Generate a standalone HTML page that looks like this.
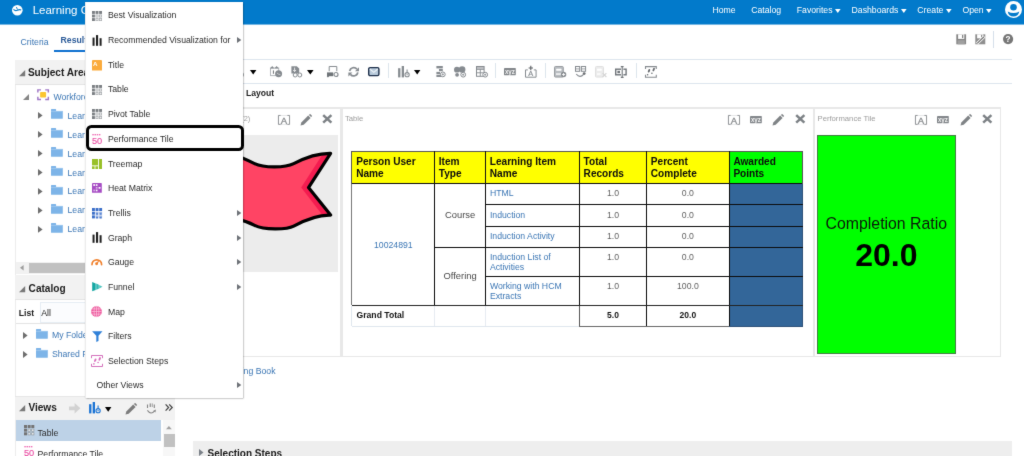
<!DOCTYPE html>
<html lang="en">
<head>
<meta charset="utf-8">
<title>Learning Completion - Results</title>
<style>
html,body{margin:0;padding:0;}
body{width:1024px;height:456px;overflow:hidden;background:#fff;position:relative;font-family:"Liberation Sans",sans-serif;}
#page{position:absolute;left:0;top:0;width:1024px;height:456px;overflow:hidden;background:#fff;filter:url(#soft);}
#page div,#page svg{position:absolute;box-sizing:border-box;}
#page svg{overflow:visible;}
.t{white-space:nowrap;}
</style>
</head>
<body>
<svg width="0" height="0" style="position:absolute"><defs><filter id="soft" x="0" y="0" width="100%" height="100%" color-interpolation-filters="sRGB"><feConvolveMatrix order="3" kernelMatrix="2 10 2 10 100 10 2 10 2" divisor="148" edgeMode="duplicate" preserveAlpha="true"/></filter></defs></svg>
<div id="page">

<div style="left:0px;top:0px;width:1024px;height:25px;background:linear-gradient(#027acb 0,#027acb 24px,#74b6e2 24px,#74b6e2 25px);"></div>
<svg style="left:12.2px;top:5.3px;" width="10.6" height="10.6" viewBox="0 0 10.6 10.6"><circle cx="5.3" cy="5.3" r="5.3" fill="#fff"/><path d="M1.5 4.4Q3.2 6.3 5.4 5.2Q7.4 4.2 9.2 4.9" fill="none" stroke="#027acb" stroke-width="1.1"/><path d="M4.4 2L5.5 4.6" stroke="#027acb" stroke-width="0.9"/></svg>
<div class="t" style="left:32.7px;top:4px;font-size:11.5px;line-height:12px;height:12px;color:#fff;">Learning Completion</div>
<div class="t" style="left:712.4px;top:5px;font-size:8.7px;line-height:10px;height:10px;color:#fff;">Home</div>
<div class="t" style="left:751.2px;top:5px;font-size:8.7px;line-height:10px;height:10px;color:#fff;">Catalog</div>
<div class="t" style="left:796.8px;top:5px;font-size:8.7px;line-height:10px;height:10px;color:#fff;">Favorites</div>
<svg style="left:835.2px;top:8.8px;" width="5.6" height="4" viewBox="0 0 5.6 4"><path d="M0 0H5.6L2.8 4Z" fill="#fff"/></svg>
<div class="t" style="left:851.6px;top:5px;font-size:8.7px;line-height:10px;height:10px;color:#fff;">Dashboards</div>
<svg style="left:901px;top:8.8px;" width="5.6" height="4" viewBox="0 0 5.6 4"><path d="M0 0H5.6L2.8 4Z" fill="#fff"/></svg>
<div class="t" style="left:917.3px;top:5px;font-size:8.7px;line-height:10px;height:10px;color:#fff;">Create</div>
<svg style="left:946.4px;top:8.8px;" width="5.6" height="4" viewBox="0 0 5.6 4"><path d="M0 0H5.6L2.8 4Z" fill="#fff"/></svg>
<div class="t" style="left:962.4px;top:5px;font-size:8.7px;line-height:10px;height:10px;color:#fff;">Open</div>
<svg style="left:986.2px;top:8.8px;" width="5.6" height="4" viewBox="0 0 5.6 4"><path d="M0 0H5.6L2.8 4Z" fill="#fff"/></svg>
<svg style="left:1005.4px;top:1.2px;" width="17" height="17" viewBox="0 0 17 17"><circle cx="8.5" cy="8.5" r="8.5" fill="#fff"/><circle cx="8.5" cy="6.3" r="3.3" fill="#027acb"/><path d="M2.7 10.6Q8.5 13.6 14.3 10.6Q13.4 15.6 8.5 15.6Q3.6 15.6 2.7 10.6Z" fill="#027acb"/></svg>
<div class="t" style="left:20.6px;top:37px;font-size:8.7px;line-height:10px;height:10px;color:#3b76b4;">Criteria</div>
<div class="t" style="left:60.6px;top:35px;font-size:8.7px;line-height:10px;height:10px;color:#2a5a98;font-weight:700;">Results</div>
<div class="t" style="left:100px;top:37px;font-size:8.7px;line-height:10px;height:10px;color:#3b76b4;">Prompts</div>
<div class="t" style="left:144px;top:37px;font-size:8.7px;line-height:10px;height:10px;color:#3b76b4;">Advanced</div>
<div style="left:54.4px;top:50px;width:44px;height:2.3px;background:#0e70d0;"></div>
<svg style="left:956px;top:34px;" width="10.4" height="10.6" viewBox="0 0 10.4 10.6"><path d="M0.3 0.3H10.1V10.3H0.3Z" fill="#858585"/><rect x="2.1" y="0.3" width="6.2" height="4.6" fill="#fff"/><rect x="6" y="0.9" width="1.3" height="3.2" fill="#858585"/><rect x="1.6" y="6.2" width="7.2" height="4.1" fill="#a0a0a0"/></svg>
<svg style="left:974.5px;top:34px;" width="10.6" height="10.6" viewBox="0 0 10.6 10.6"><path d="M0.3 0.3H10.3V10.3H0.3Z" fill="#8e8e8e"/><rect x="2.1" y="0.3" width="6.2" height="4" fill="#fff"/><rect x="6" y="0.9" width="1.3" height="2.6" fill="#8e8e8e"/><path d="M2 9.6L9.4 2.4" stroke="#fff" stroke-width="2.8"/><path d="M2.2 9.4L9 2.8" stroke="#777" stroke-width="1.3"/></svg>
<div style="left:993.3px;top:31px;width:1px;height:16.5px;background:#d5dfea;"></div>
<svg style="left:1003.4px;top:34.3px;" width="10.2" height="10.2" viewBox="0 0 10.2 10.2"><circle cx="5.1" cy="5.1" r="5.1" fill="#777"/><text x="5.1" y="8.1" text-anchor="middle" font-family="Liberation Sans, sans-serif" font-size="8.2" font-weight="700" fill="#fff">?</text></svg>
<div style="left:14.6px;top:60px;width:160.4px;height:396px;border-left:1px solid #ececec;background:#fff;"></div>
<div style="left:15px;top:60px;width:160px;height:24.6px;background:#f2f2f2;border-bottom:1px solid #e4e4e4;"></div>
<svg style="left:18.6px;top:70.2px;" width="6.2" height="6.2" viewBox="0 0 6.2 6.2"><path d="M6.2 0V6.2H0Z" fill="#787878"/></svg>
<div class="t" style="left:27.9px;top:67px;font-size:10.1px;line-height:11px;height:11px;color:#1c1c1c;font-weight:700;">Subject Areas</div>
<svg style="left:23.2px;top:93.8px;" width="6" height="6" viewBox="0 0 6 6"><path d="M6 0V6H0Z" fill="#858585"/></svg>
<svg style="left:36.9px;top:89px;" width="12.2" height="11.4" viewBox="0 0 12.2 11.4"><g fill="none" stroke="#a078c6" stroke-width="1.45"><path d="M0.85 3.6V0.85H4M8.2 0.85H11.35V3.6M11.35 7.8V10.55H8.2M4 10.55H0.85V7.8"/></g><rect x="3.1" y="2.9" width="6" height="5.6" rx="0.8" fill="#fbc530"/></svg>
<div class="t" style="left:53.5px;top:92px;font-size:8.7px;line-height:10px;height:10px;color:#3b76b4;">Workforce Management - Learning Real Time</div>
<svg style="left:38.1px;top:112.25px;" width="4.6" height="6.8" viewBox="0 0 4.6 6.8"><path d="M0 0L4.6 3.4L0 6.8Z" fill="#6e6e6e"/></svg>
<svg style="left:51.2px;top:109.35px;" width="11.8" height="9.8" viewBox="0 0 11.8 9.8"><path d="M0 0.5Q0 0 0.5 0H4.6Q5.1 0 5.1 0.5V1.9H11.3Q11.8 1.9 11.8 2.4V9.3Q11.8 9.8 11.3 9.8H0.5Q0 9.8 0 9.3Z" fill="#7db4e8"/><rect x="0" y="1.9" width="11.8" height="1" fill="#9cc6ee"/></svg>
<div class="t" style="left:67.5px;top:111px;font-size:8.7px;line-height:10px;height:10px;color:#3b76b4;">Learning Assignment</div>
<svg style="left:38.1px;top:131.17px;" width="4.6" height="6.8" viewBox="0 0 4.6 6.8"><path d="M0 0L4.6 3.4L0 6.8Z" fill="#6e6e6e"/></svg>
<svg style="left:51.2px;top:128.27px;" width="11.8" height="9.8" viewBox="0 0 11.8 9.8"><path d="M0 0.5Q0 0 0.5 0H4.6Q5.1 0 5.1 0.5V1.9H11.3Q11.8 1.9 11.8 2.4V9.3Q11.8 9.8 11.3 9.8H0.5Q0 9.8 0 9.3Z" fill="#7db4e8"/><rect x="0" y="1.9" width="11.8" height="1" fill="#9cc6ee"/></svg>
<div class="t" style="left:67.5px;top:130px;font-size:8.7px;line-height:10px;height:10px;color:#3b76b4;">Learning Completion</div>
<svg style="left:38.1px;top:150.09px;" width="4.6" height="6.8" viewBox="0 0 4.6 6.8"><path d="M0 0L4.6 3.4L0 6.8Z" fill="#6e6e6e"/></svg>
<svg style="left:51.2px;top:147.19px;" width="11.8" height="9.8" viewBox="0 0 11.8 9.8"><path d="M0 0.5Q0 0 0.5 0H4.6Q5.1 0 5.1 0.5V1.9H11.3Q11.8 1.9 11.8 2.4V9.3Q11.8 9.8 11.3 9.8H0.5Q0 9.8 0 9.3Z" fill="#7db4e8"/><rect x="0" y="1.9" width="11.8" height="1" fill="#9cc6ee"/></svg>
<div class="t" style="left:67.5px;top:149px;font-size:8.7px;line-height:10px;height:10px;color:#3b76b4;">Learning Enrollment</div>
<svg style="left:38.1px;top:169.01px;" width="4.6" height="6.8" viewBox="0 0 4.6 6.8"><path d="M0 0L4.6 3.4L0 6.8Z" fill="#6e6e6e"/></svg>
<svg style="left:51.2px;top:166.11px;" width="11.8" height="9.8" viewBox="0 0 11.8 9.8"><path d="M0 0.5Q0 0 0.5 0H4.6Q5.1 0 5.1 0.5V1.9H11.3Q11.8 1.9 11.8 2.4V9.3Q11.8 9.8 11.3 9.8H0.5Q0 9.8 0 9.3Z" fill="#7db4e8"/><rect x="0" y="1.9" width="11.8" height="1" fill="#9cc6ee"/></svg>
<div class="t" style="left:67.5px;top:168px;font-size:8.7px;line-height:10px;height:10px;color:#3b76b4;">Learning Item</div>
<svg style="left:38.1px;top:187.93px;" width="4.6" height="6.8" viewBox="0 0 4.6 6.8"><path d="M0 0L4.6 3.4L0 6.8Z" fill="#6e6e6e"/></svg>
<svg style="left:51.2px;top:185.03px;" width="11.8" height="9.8" viewBox="0 0 11.8 9.8"><path d="M0 0.5Q0 0 0.5 0H4.6Q5.1 0 5.1 0.5V1.9H11.3Q11.8 1.9 11.8 2.4V9.3Q11.8 9.8 11.3 9.8H0.5Q0 9.8 0 9.3Z" fill="#7db4e8"/><rect x="0" y="1.9" width="11.8" height="1" fill="#9cc6ee"/></svg>
<div class="t" style="left:67.5px;top:186px;font-size:8.7px;line-height:10px;height:10px;color:#3b76b4;">Learning Offering</div>
<svg style="left:38.1px;top:206.85px;" width="4.6" height="6.8" viewBox="0 0 4.6 6.8"><path d="M0 0L4.6 3.4L0 6.8Z" fill="#6e6e6e"/></svg>
<svg style="left:51.2px;top:203.95px;" width="11.8" height="9.8" viewBox="0 0 11.8 9.8"><path d="M0 0.5Q0 0 0.5 0H4.6Q5.1 0 5.1 0.5V1.9H11.3Q11.8 1.9 11.8 2.4V9.3Q11.8 9.8 11.3 9.8H0.5Q0 9.8 0 9.3Z" fill="#7db4e8"/><rect x="0" y="1.9" width="11.8" height="1" fill="#9cc6ee"/></svg>
<div class="t" style="left:67.5px;top:205px;font-size:8.7px;line-height:10px;height:10px;color:#3b76b4;">Learning Person</div>
<svg style="left:38.1px;top:225.77px;" width="4.6" height="6.8" viewBox="0 0 4.6 6.8"><path d="M0 0L4.6 3.4L0 6.8Z" fill="#6e6e6e"/></svg>
<svg style="left:51.2px;top:222.87px;" width="11.8" height="9.8" viewBox="0 0 11.8 9.8"><path d="M0 0.5Q0 0 0.5 0H4.6Q5.1 0 5.1 0.5V1.9H11.3Q11.8 1.9 11.8 2.4V9.3Q11.8 9.8 11.3 9.8H0.5Q0 9.8 0 9.3Z" fill="#7db4e8"/><rect x="0" y="1.9" width="11.8" height="1" fill="#9cc6ee"/></svg>
<div class="t" style="left:67.5px;top:224px;font-size:8.7px;line-height:10px;height:10px;color:#3b76b4;">Learning Records</div>
<div style="left:15.6px;top:261.9px;width:159.4px;height:12.5px;background:#f1f1f1;"></div>
<svg style="left:20px;top:265.3px;" width="3.6" height="5.6" viewBox="0 0 3.6 5.6"><path d="M3.6 0V5.6L0 2.8Z" fill="#9c9c9c"/></svg>
<div style="left:29px;top:262.8px;width:120px;height:10.7px;background:#c1c1c1;"></div>
<div style="left:15px;top:275.4px;width:160px;height:25px;background:#f2f2f2;border-bottom:1px solid #e4e4e4;"></div>
<svg style="left:18.9px;top:285.5px;" width="6.2" height="6.2" viewBox="0 0 6.2 6.2"><path d="M6.2 0V6.2H0Z" fill="#787878"/></svg>
<div class="t" style="left:28.6px;top:283px;font-size:10.1px;line-height:11px;height:11px;color:#1c1c1c;font-weight:700;">Catalog</div>
<div class="t" style="left:18.8px;top:308px;font-size:8.7px;line-height:10px;height:10px;color:#1c1c1c;font-weight:700;">List</div>
<div style="left:40.2px;top:302.2px;width:120px;height:20.4px;background:#fbfcfe;border:1px solid #e6edf4;"></div>
<div class="t" style="left:41.2px;top:308px;font-size:8.7px;line-height:10px;height:10px;color:#222;">All</div>
<div style="left:15.6px;top:323.4px;width:159.4px;height:1px;background:#e4e4e4;"></div>
<svg style="left:22.5px;top:331.7px;" width="4.6" height="7" viewBox="0 0 4.6 7"><path d="M0 0L4.6 3.5L0 7Z" fill="#6e6e6e"/></svg>
<svg style="left:35.6px;top:329.1px;" width="11.8" height="9.8" viewBox="0 0 11.8 9.8"><path d="M0 0.5Q0 0 0.5 0H4.6Q5.1 0 5.1 0.5V1.9H11.3Q11.8 1.9 11.8 2.4V9.3Q11.8 9.8 11.3 9.8H0.5Q0 9.8 0 9.3Z" fill="#7db4e8"/><rect x="0" y="1.9" width="11.8" height="1" fill="#9cc6ee"/></svg>
<div class="t" style="left:51.9px;top:330px;font-size:8.7px;line-height:10px;height:10px;color:#3b76b4;">My Folders</div>
<svg style="left:22.5px;top:350.8px;" width="4.6" height="7" viewBox="0 0 4.6 7"><path d="M0 0L4.6 3.5L0 7Z" fill="#6e6e6e"/></svg>
<svg style="left:35.6px;top:348px;" width="11.8" height="9.8" viewBox="0 0 11.8 9.8"><path d="M0 0.5Q0 0 0.5 0H4.6Q5.1 0 5.1 0.5V1.9H11.3Q11.8 1.9 11.8 2.4V9.3Q11.8 9.8 11.3 9.8H0.5Q0 9.8 0 9.3Z" fill="#7db4e8"/><rect x="0" y="1.9" width="11.8" height="1" fill="#9cc6ee"/></svg>
<div class="t" style="left:51.9px;top:349px;font-size:8.7px;line-height:10px;height:10px;color:#3b76b4;">Shared Folders</div>
<div style="left:15px;top:395.6px;width:159.7px;height:24.6px;background:#f2f2f2;border-top:1px solid #e6e6e6;"></div>
<svg style="left:19px;top:405.4px;" width="6.2" height="6.2" viewBox="0 0 6.2 6.2"><path d="M6.2 0V6.2H0Z" fill="#787878"/></svg>
<div class="t" style="left:28.4px;top:402px;font-size:10.1px;line-height:11px;height:11px;color:#1c1c1c;font-weight:700;">Views</div>
<svg style="left:68.6px;top:403.1px;" width="11.4" height="10.6" viewBox="0 0 11.4 10.6"><path d="M0 3.4H5.6V0L11.4 5.3L5.6 10.6V7.2H0Z" fill="#d2d2d2"/></svg>
<svg style="left:88.7px;top:402.4px;" width="11.6" height="11.4" viewBox="0 0 11.6 11.4"><rect x="0.1" y="2.2" width="2.3" height="9.2" fill="#1a73d4"/><rect x="3.7" y="0" width="2.3" height="11.4" fill="#1a73d4"/><circle cx="9.1" cy="8.7" r="2.1" fill="none" stroke="#1a73d4" stroke-width="1.1"/><path d="M9.1 3.6V6.4" stroke="#1a73d4" stroke-width="1.1"/><circle cx="9.1" cy="8.7" r="0.6" fill="#1a73d4"/></svg>
<svg style="left:105px;top:406.9px;" width="6.4" height="4.8" viewBox="0 0 6.4 4.8"><path d="M0 0H6.4L3.2 4.8Z" fill="#000"/></svg>
<svg style="left:124.8px;top:402.6px;" width="12" height="12" viewBox="0 0 12 12"><path d="M0.5 11.6L1.3 8.4L8.2 1.5L10.6 3.9L3.7 10.8Z" fill="#7c7c7c"/><path d="M8.9 0.9L9.7 0.2Q10.1 -0.1 10.5 0.3L11.8 1.6Q12.1 2 11.8 2.4L11.1 3.1Z" fill="#7c7c7c"/></svg>
<svg style="left:145.9px;top:403.4px;" width="10.8" height="11.2" viewBox="0 0 10.8 11.2"><g fill="none" stroke="#858585" stroke-width="1.1"><path d="M1.5 1.4V5M8.3 1.4V5"/><path d="M1.4 7.4Q5 12.4 8.6 7.8"/></g><rect x="3.6" y="0.4" width="1.5" height="3.6" fill="#9a9a9a"/><rect x="5.8" y="0.4" width="1.2" height="3.6" fill="#b0b0b0"/><path d="M10 6.6L9.4 9.4L7.4 7.8Z" fill="#858585"/></svg>
<svg style="left:164.6px;top:404px;" width="8" height="7" viewBox="0 0 8 7"><path d="M0.6 0.4L3.6 3.5L0.6 6.6M4.2 0.4L7.2 3.5L4.2 6.6" fill="none" stroke="#444" stroke-width="1.25"/></svg>
<div style="left:16.2px;top:420.2px;width:144.8px;height:20.9px;background:#bdd2e7;"></div>
<svg style="left:23.7px;top:425.3px;" width="10.3" height="10.3" viewBox="0 0 10.3 10.3"><rect x="0.00" y="0.00" width="2.99" height="2.99" fill="#737373"/><rect x="3.66" y="0.00" width="2.99" height="2.99" fill="#737373"/><rect x="7.31" y="0.00" width="2.99" height="2.99" fill="#737373"/><rect x="0.00" y="3.66" width="2.99" height="2.99" fill="#737373"/><rect x="4.02" y="4.02" width="2.27" height="2.27" fill="#f0f0f0" stroke="#8f98a0" stroke-width="0.72"/><rect x="7.67" y="4.02" width="2.27" height="2.27" fill="#f0f0f0" stroke="#8f98a0" stroke-width="0.72"/><rect x="0.00" y="7.31" width="2.99" height="2.99" fill="#737373"/><rect x="4.02" y="7.67" width="2.27" height="2.27" fill="#f0f0f0" stroke="#8f98a0" stroke-width="0.72"/><rect x="7.67" y="7.67" width="2.27" height="2.27" fill="#f0f0f0" stroke="#8f98a0" stroke-width="0.72"/></svg>
<div class="t" style="left:37.5px;top:428px;font-size:8.7px;line-height:10px;height:10px;color:#2a2a2a;">Table</div>
<svg style="left:23.7px;top:446.4px;" width="10.4" height="10.4" viewBox="0 0 10.4 10.4"><g fill="#ea4ea4"><rect x="0.3" y="0.2" width="1.5" height="1.1"/><rect x="2.5" y="0.2" width="1.5" height="1.1"/><rect x="4.7" y="0.2" width="1.5" height="1.1"/><rect x="6.9" y="0.2" width="1.5" height="1.1"/></g><text x="-0.1" y="10.3" font-family="Liberation Sans, sans-serif" font-size="9.8" fill="#ea4ea4" stroke="#ea4ea4" stroke-width="0.12" textLength="10.3" lengthAdjust="spacingAndGlyphs">50</text></svg>
<div class="t" style="left:37.5px;top:449px;font-size:8.7px;line-height:10px;height:10px;color:#2a2a2a;">Performance Tile</div>
<div style="left:163.4px;top:420.4px;width:11.2px;height:35.6px;background:#f7f7f7;"></div>
<svg style="left:165.9px;top:425.9px;" width="5.8" height="3.2" viewBox="0 0 5.8 3.2"><path d="M0 3.2L2.9 0L5.8 3.2Z" fill="#a0a0a0"/></svg>
<div style="left:163.5px;top:434.3px;width:11px;height:12.8px;background:#c1c1c1;"></div>
<div style="left:193px;top:59px;width:819px;height:1px;background:#dde5ee;"></div>
<div style="left:193px;top:83.1px;width:819px;height:1px;background:#dde5ee;"></div>
<svg style="left:232px;top:66.2px;" width="11.6" height="11.4" viewBox="0 0 11.6 11.4"><rect x="0.1" y="2.2" width="2.3" height="9.2" fill="#868b90"/><rect x="3.7" y="0" width="2.3" height="11.4" fill="#868b90"/><circle cx="9.1" cy="8.7" r="2.1" fill="none" stroke="#868b90" stroke-width="1.1"/><path d="M9.1 3.6V6.4" stroke="#868b90" stroke-width="1.1"/><circle cx="9.1" cy="8.7" r="0.6" fill="#868b90"/></svg>
<svg style="left:250.4px;top:70.3px;" width="6.4" height="4.6" viewBox="0 0 6.4 4.6"><path d="M0 0H6.4L3.2 4.6Z" fill="#000"/></svg>
<svg style="left:270px;top:66.2px;" width="11.6" height="11.4" viewBox="0 0 11.6 11.4"><rect x="0.5" y="2" width="8.2" height="7.6" fill="#fff" stroke="#b4b8bc" stroke-width="1"/><path d="M0 2.6L2.2 0L4.4 2.6L6.6 0L8.9 2.6Z" fill="#868b90"/><rect x="2.9" y="4.4" width="1" height="3.4" fill="#6c7074"/><circle cx="8.6" cy="7.8" r="3.5" fill="#868b90"/><path d="M7 7L8.6 8.2L10.4 8.6" stroke="#d8d8d8" stroke-width="0.8" fill="none"/></svg>
<svg style="left:291.4px;top:66.2px;" width="11.6" height="11.4" viewBox="0 0 11.6 11.4"><path d="M0.4 0.2H5.8L8.2 2.6V7.4H0.4Z" fill="#868b90"/><path d="M3.6 1.6V5.4M2.2 4L3.6 5.6L5 4" stroke="#fff" stroke-width="0.8" fill="none"/><circle cx="4.2" cy="9" r="2" fill="#fff" stroke="#868b90" stroke-width="1"/><circle cx="8.8" cy="9" r="2" fill="#fff" stroke="#868b90" stroke-width="1"/></svg>
<svg style="left:306.7px;top:70.3px;" width="6.6" height="4.6" viewBox="0 0 6.6 4.6"><path d="M0 0H6.6L3.3 4.6Z" fill="#000"/></svg>
<svg style="left:327.2px;top:66.2px;" width="11.6" height="11.4" viewBox="0 0 11.6 11.4"><path d="M2.2 5.2V0.5H9.8V5.2" fill="none" stroke="#868b90" stroke-width="1"/><rect x="0" y="6.4" width="6.2" height="3.8" fill="#6f7478"/><path d="M0.4 11L2 9.2" stroke="#6f7478" stroke-width="1.5"/><circle cx="9" cy="8.5" r="2" fill="none" stroke="#868b90" stroke-width="1.2"/></svg>
<svg style="left:348px;top:66.2px;" width="11.6" height="11.4" viewBox="0 0 11.6 11.4"><path d="M1.6 5A4.2 4.2 0 0 1 9 3.2" fill="none" stroke="#868b90" stroke-width="1.7"/><path d="M9.8 6.4A4.2 4.2 0 0 1 2.4 8.4" fill="none" stroke="#868b90" stroke-width="1.7"/><path d="M11 1.2V5.2H7Z" fill="#868b90"/><path d="M0.4 10.4V6.4H4.4Z" fill="#868b90"/></svg>
<svg style="left:368px;top:66.2px;" width="11.6" height="11.4" viewBox="0 0 11.6 11.4"><rect x="0.7" y="1.6" width="10.2" height="8" rx="1.4" fill="#b9cbdc" stroke="#1d2f4a" stroke-width="1.4"/><path d="M1.8 3L5.8 6.4L9.8 3" fill="none" stroke="#eef3f8" stroke-width="1.1"/></svg>
<div style="left:388px;top:63px;width:1px;height:15.4px;background:#dde5ed;"></div>
<svg style="left:397.6px;top:66.2px;" width="11.6" height="11.4" viewBox="0 0 11.6 11.4"><rect x="0.1" y="2.2" width="2.3" height="9.2" fill="#868b90"/><rect x="3.7" y="0" width="2.3" height="11.4" fill="#868b90"/><circle cx="9.1" cy="8.7" r="2.1" fill="none" stroke="#868b90" stroke-width="1.1"/><path d="M9.1 3.6V6.4" stroke="#868b90" stroke-width="1.1"/><circle cx="9.1" cy="8.7" r="0.6" fill="#868b90"/></svg>
<svg style="left:413.8px;top:70.3px;" width="6.4" height="4.6" viewBox="0 0 6.4 4.6"><path d="M0 0H6.4L3.2 4.6Z" fill="#000"/></svg>
<svg style="left:436.4px;top:66.2px;" width="11.6" height="11.4" viewBox="0 0 11.6 11.4"><rect x="0.4" y="0" width="6.4" height="2.4" fill="#868b90"/><rect x="3" y="3" width="3.8" height="2.2" fill="#868b90"/><rect x="0.4" y="5.9" width="3.6" height="2.2" fill="#868b90"/><rect x="0.4" y="8.8" width="4.6" height="2.2" fill="#868b90"/><circle cx="6.8" cy="8.4" r="2.4" fill="#fff" stroke="#868b90" stroke-width="1"/><path d="M5.7 8.4H7.9M6.8 7.3V9.5" stroke="#868b90" stroke-width="0.8"/></svg>
<svg style="left:454.4px;top:66.2px;" width="11.6" height="11.4" viewBox="0 0 11.6 11.4"><circle cx="2.9" cy="3.7" r="2.9" fill="#868b90"/><circle cx="8.1" cy="3.5" r="3.3" fill="#868b90"/><circle cx="3.1" cy="8.8" r="1.9" fill="#868b90"/><circle cx="9.2" cy="8.7" r="2.4" fill="#fff" stroke="#868b90" stroke-width="1"/><path d="M8.1 8.7H10.3M9.2 7.6V9.8" stroke="#868b90" stroke-width="0.8"/></svg>
<svg style="left:476px;top:66.2px;" width="11.6" height="11.4" viewBox="0 0 11.6 11.4"><rect x="0.5" y="0.5" width="7.6" height="9.8" fill="#fff" stroke="#868b90" stroke-width="1"/><rect x="0.5" y="0.5" width="7.6" height="2.4" fill="#868b90" opacity="0.55"/><path d="M0.5 3.4H8.1M0.5 6.8H8.1M4.3 3.4V10.2" stroke="#868b90" stroke-width="0.9"/><circle cx="9.2" cy="8.7" r="2.4" fill="#fff" stroke="#868b90" stroke-width="1"/><path d="M8.1 8.7H10.3M9.2 7.6V9.8" stroke="#868b90" stroke-width="0.8"/></svg>
<div style="left:494.6px;top:63px;width:1px;height:15.4px;background:#dde5ed;"></div>
<svg style="left:504.2px;top:68px;" width="11.8" height="7.2" viewBox="0 0 11.8 7.2"><rect width="11.8" height="7.2" rx="0.4" fill="#83878b"/><text x="5.9" y="5.5" text-anchor="middle" font-family="Liberation Sans, sans-serif" font-size="6.6" font-weight="700" fill="#f4f4f4" textLength="10" lengthAdjust="spacingAndGlyphs">xyz</text></svg>
<svg style="left:524.6px;top:66.2px;" width="11.6" height="11.4" viewBox="0 0 11.6 11.4"><path d="M2.8 3.9H0.5V11.2H11.1V3.9H8.8" fill="none" stroke="#868b90" stroke-width="1"/><path d="M5.8 -0.2V4.2M3.6 2H8" stroke="#5a5e62" stroke-width="1.1"/><text x="5.8" y="10.4" text-anchor="middle" font-family="Liberation Sans, sans-serif" font-size="7.4" fill="#868b90" stroke="#868b90" stroke-width="0.2">A</text></svg>
<div style="left:544.8px;top:63px;width:1px;height:15.4px;background:#dde5ed;"></div>
<svg style="left:554px;top:66.2px;" width="11.6" height="11.4" viewBox="0 0 11.6 11.4"><rect x="0.5" y="0.5" width="8.8" height="10.6" rx="0.9" fill="#b9bdc1" stroke="#979b9f" stroke-width="1"/><rect x="2.2" y="2.7" width="5.2" height="2" rx="0.5" fill="#fff"/><rect x="2" y="7.4" width="5.6" height="1.3" fill="#fff"/><circle cx="9.6" cy="8.5" r="2.7" fill="#8a8e92"/><path d="M8.1 8.5H11.1M9.6 7V10" stroke="#fff" stroke-width="0.9"/></svg>
<svg style="left:575.4px;top:66.2px;" width="11.6" height="11.4" viewBox="0 0 11.6 11.4"><rect x="0.5" y="0.5" width="4.2" height="4.8" fill="#fff" stroke="#868b90" stroke-width="1"/><rect x="6.4" y="0.5" width="4.2" height="4.8" fill="#fff" stroke="#868b90" stroke-width="1"/><path d="M0.5 2.9H4.7M6.4 2.9H10.6" stroke="#868b90" stroke-width="0.8"/><path d="M1.2 8Q5 12.6 8.6 8.4" fill="none" stroke="#868b90" stroke-width="1.1"/><circle cx="9.2" cy="7.6" r="1.4" fill="#6c7074"/></svg>
<svg style="left:595px;top:66.2px;" width="11.6" height="11.4" viewBox="0 0 11.6 11.4"><rect x="0.5" y="0.5" width="8" height="10.6" rx="0.9" fill="#ececec" stroke="#e0e0e0" stroke-width="1"/><rect x="2" y="2.7" width="4.6" height="2" rx="0.5" fill="#fff"/><rect x="2" y="7.4" width="3.6" height="1.3" fill="#fff"/><path d="M7.6 7.2L11.4 11M11.4 7.2L7.6 11" stroke="#d6d6d6" stroke-width="1.2"/></svg>
<svg style="left:615.4px;top:66.2px;" width="11.6" height="11.4" viewBox="0 0 11.6 11.4"><rect x="0.7" y="3.2" width="10.4" height="5.6" fill="#fff" stroke="#70757a" stroke-width="1.4"/><rect x="2.4" y="4.8" width="2.6" height="2.4" fill="#70757a"/><rect x="6" y="0.6" width="2.4" height="10.8" fill="#fff"/><path d="M7.2 0.6V11.4M5.8 0.6H8.6M5.8 11.4H8.6" stroke="#70757a" stroke-width="1.1" fill="none"/></svg>
<div style="left:636px;top:63px;width:1px;height:15.4px;background:#dde5ed;"></div>
<svg style="left:645.4px;top:66.2px;" width="11.6" height="11.4" viewBox="0 0 11.6 11.4"><path d="M0.5 3V0.6H11.3V3M0.5 8.8V11.2H11.3V8.8" fill="none" stroke="#868b90" stroke-width="1.1"/><g fill="#686c70"><ellipse cx="4" cy="4.8" rx="1" ry="1.9" transform="rotate(24 4 4.8)"/><ellipse cx="8.7" cy="3.6" rx="1" ry="1.9" transform="rotate(24 8.7 3.6)"/><circle cx="2.6" cy="8.8" r="0.8"/><circle cx="6.9" cy="7.2" r="0.8"/></g></svg>
<div class="t" style="left:193.6px;top:88px;font-size:8.6px;line-height:10px;height:10px;color:#1c1c1c;font-weight:700;">Compound</div>
<div class="t" style="left:246px;top:88px;font-size:8.6px;line-height:10px;height:10px;color:#1c1c1c;font-weight:700;">Layout</div>
<div style="left:193px;top:107px;width:808px;height:250.2px;background:#e8e8e8;"></div>
<div style="left:194.2px;top:108.6px;width:145.4px;height:247.4px;background:#fff;"></div>
<div style="left:342.5px;top:108.6px;width:470.3px;height:247.4px;background:#fff;"></div>
<div style="left:814.6px;top:108.6px;width:185.4px;height:247.4px;background:#fff;"></div>
<div class="t" style="left:210.3px;top:114px;font-size:7.4px;line-height:9px;height:9px;color:#9c9c9c;width:40px;text-align:right;">Title (2)</div>
<svg style="left:277.7px;top:114.9px;" width="12" height="9.8" viewBox="0 0 12 9.8"><rect x="0.45" y="0.45" width="11.1" height="8.9" fill="none" stroke="#e0e2e4" stroke-width="0.8"/><path d="M2.6 0.45H0.45V9.35H2.6M9.4 0.45H11.55V9.35H9.4" fill="none" stroke="#8a8d90" stroke-width="0.9"/><text x="6" y="8.5" text-anchor="middle" font-family="Liberation Sans, sans-serif" font-size="9.6" fill="#8a8d90" stroke="#8a8d90" stroke-width="0.35">A</text></svg>
<svg style="left:299.9px;top:113.6px;" width="12" height="12" viewBox="0 0 12 12"><path d="M0.5 11.6L1.3 8.4L8.2 1.5L10.6 3.9L3.7 10.8Z" fill="#7f8386"/><path d="M8.9 0.9L9.7 0.2Q10.1 -0.1 10.5 0.3L11.8 1.6Q12.1 2 11.8 2.4L11.1 3.1Z" fill="#7f8386"/></svg>
<svg style="left:322.3px;top:114px;" width="10.6" height="9.8" viewBox="0 0 10.6 9.8"><path d="M1.2 1.1L9.4 8.7M9.4 1.1L1.2 8.7" stroke="#7d8286" stroke-width="2.5"/></svg>
<div style="left:196px;top:135.2px;width:142px;height:137.3px;background:#ececec;"></div>
<svg style="left:196px;top:135.5px;overflow:hidden" width="142" height="137" viewBox="196 135.5 142 137"><path d="M205 150C225 149 240 156 254.6 163.1C263.4 167.4 285 167.6 293.7 163.1C301.5 159 316 152.6 330.6 152.8L308.5 187.1L330.6 214.6C319 214.2 304 220 293.7 225.6C287 229.2 264 229.6 254.6 224.9C247.1 221.1 225 213 205 214Z" fill="#ff4464"/><path d="M330 153.4L308.5 187.1L330 214.2L321.6 213.4L301.2 187.1L321.8 155Z" fill="#f41c50"/><path d="M205 150C225 149 240 156 254.6 163.1C263.4 167.4 285 167.6 293.7 163.1C301.5 159 316 152.6 330.6 152.8L308.5 187.1L330.6 214.6C319 214.2 304 220 293.7 225.6C287 229.2 264 229.6 254.6 224.9C247.1 221.1 225 213 205 214Z" fill="none" stroke="#000" stroke-width="3.2" stroke-linejoin="round"/></svg>
<div class="t" style="left:344.9px;top:114px;font-size:7.7px;line-height:9px;height:9px;color:#9c9c9c;">Table</div>
<svg style="left:727.5px;top:114.9px;" width="12" height="9.8" viewBox="0 0 12 9.8"><rect x="0.45" y="0.45" width="11.1" height="8.9" fill="none" stroke="#e0e2e4" stroke-width="0.8"/><path d="M2.6 0.45H0.45V9.35H2.6M9.4 0.45H11.55V9.35H9.4" fill="none" stroke="#8a8d90" stroke-width="0.9"/><text x="6" y="8.5" text-anchor="middle" font-family="Liberation Sans, sans-serif" font-size="9.6" fill="#8a8d90" stroke="#8a8d90" stroke-width="0.35">A</text></svg>
<svg style="left:750.1px;top:115.9px;" width="11.8" height="7.2" viewBox="0 0 11.8 7.2"><rect width="11.8" height="7.2" rx="0.4" fill="#83878b"/><text x="5.9" y="5.5" text-anchor="middle" font-family="Liberation Sans, sans-serif" font-size="6.6" font-weight="700" fill="#f4f4f4" textLength="10" lengthAdjust="spacingAndGlyphs">xyz</text></svg>
<svg style="left:772.3px;top:113.6px;" width="12" height="12" viewBox="0 0 12 12"><path d="M0.5 11.6L1.3 8.4L8.2 1.5L10.6 3.9L3.7 10.8Z" fill="#7f8386"/><path d="M8.9 0.9L9.7 0.2Q10.1 -0.1 10.5 0.3L11.8 1.6Q12.1 2 11.8 2.4L11.1 3.1Z" fill="#7f8386"/></svg>
<svg style="left:794.9px;top:114px;" width="10.6" height="9.8" viewBox="0 0 10.6 9.8"><path d="M1.2 1.1L9.4 8.7M9.4 1.1L1.2 8.7" stroke="#7d8286" stroke-width="2.5"/></svg>
<div class="t" style="left:817.5px;top:114px;font-size:7.7px;line-height:9px;height:9px;color:#9c9c9c;">Performance Tile</div>
<svg style="left:915px;top:114.9px;" width="12" height="9.8" viewBox="0 0 12 9.8"><rect x="0.45" y="0.45" width="11.1" height="8.9" fill="none" stroke="#e0e2e4" stroke-width="0.8"/><path d="M2.6 0.45H0.45V9.35H2.6M9.4 0.45H11.55V9.35H9.4" fill="none" stroke="#8a8d90" stroke-width="0.9"/><text x="6" y="8.5" text-anchor="middle" font-family="Liberation Sans, sans-serif" font-size="9.6" fill="#8a8d90" stroke="#8a8d90" stroke-width="0.35">A</text></svg>
<svg style="left:937.4px;top:115.9px;" width="11.8" height="7.2" viewBox="0 0 11.8 7.2"><rect width="11.8" height="7.2" rx="0.4" fill="#83878b"/><text x="5.9" y="5.5" text-anchor="middle" font-family="Liberation Sans, sans-serif" font-size="6.6" font-weight="700" fill="#f4f4f4" textLength="10" lengthAdjust="spacingAndGlyphs">xyz</text></svg>
<svg style="left:959.6px;top:113.6px;" width="12" height="12" viewBox="0 0 12 12"><path d="M0.5 11.6L1.3 8.4L8.2 1.5L10.6 3.9L3.7 10.8Z" fill="#7f8386"/><path d="M8.9 0.9L9.7 0.2Q10.1 -0.1 10.5 0.3L11.8 1.6Q12.1 2 11.8 2.4L11.1 3.1Z" fill="#7f8386"/></svg>
<svg style="left:982.1px;top:114px;" width="10.6" height="9.8" viewBox="0 0 10.6 9.8"><path d="M1.2 1.1L9.4 8.7M9.4 1.1L1.2 8.7" stroke="#7d8286" stroke-width="2.5"/></svg>
<div style="left:817px;top:135.2px;width:138.6px;height:218.4px;background:#00ff00;border:1px solid #3f7f3f;"></div>
<div class="t" style="left:817px;top:215px;font-size:15.85px;line-height:17px;height:17px;color:#0a180a;width:138.6px;text-align:center;">Completion Ratio</div>
<div class="t" style="left:817px;top:237px;font-size:32px;line-height:36px;height:36px;color:#000;font-weight:700;width:138.6px;text-align:center;">20.0</div>
<div style="left:352px;top:151.3px;width:377.2px;height:32.3px;background:#ffff00;"></div>
<div style="left:729.2px;top:151.3px;width:73.6px;height:32.3px;background:#00ff00;"></div>
<div style="left:729.2px;top:183.6px;width:73.6px;height:142.6px;background:#336699;"></div>
<div style="left:352px;top:326px;width:227.4px;height:1px;background:#dfe6ee;"></div>
<div style="left:351px;top:305.5px;width:1px;height:20.7px;background:#dfe6ee;"></div>
<div style="left:434px;top:305.5px;width:1px;height:20.7px;background:#e6ebf1;"></div>
<div style="left:485px;top:305.5px;width:1px;height:20.7px;background:#e6ebf1;"></div>
<div style="left:352px;top:151px;width:450.8px;height:1px;background:#555;"></div>
<div style="left:352px;top:183px;width:450.8px;height:1.3px;background:#0c0c0c;"></div>
<div style="left:351px;top:151.3px;width:1px;height:32.3px;background:#555;"></div>
<div style="left:434px;top:151.3px;width:1.3px;height:32.3px;background:#111;"></div>
<div style="left:485px;top:151.3px;width:1.3px;height:32.3px;background:#111;"></div>
<div style="left:578.7px;top:151.3px;width:1.3px;height:32.3px;background:#111;"></div>
<div style="left:646px;top:151.3px;width:1.3px;height:32.3px;background:#111;"></div>
<div style="left:728.7px;top:151.3px;width:1.3px;height:32.3px;background:#111;"></div>
<div style="left:802px;top:151.3px;width:1px;height:32.3px;background:#555;"></div>
<div style="left:351px;top:183.6px;width:1px;height:121.9px;background:#777;"></div>
<div style="left:434px;top:183.6px;width:1.3px;height:121.9px;background:#0c0c0c;"></div>
<div style="left:485px;top:183.6px;width:1.3px;height:121.9px;background:#0c0c0c;"></div>
<div style="left:578.7px;top:183.6px;width:1.3px;height:121.9px;background:#0c0c0c;"></div>
<div style="left:579px;top:305.5px;width:1px;height:20.7px;background:#555;"></div>
<div style="left:646px;top:183.6px;width:1.3px;height:142.6px;background:#0c0c0c;"></div>
<div style="left:728.7px;top:183.6px;width:1.3px;height:142.6px;background:#0c0c0c;"></div>
<div style="left:802px;top:183.6px;width:1px;height:142.6px;background:#2b4f78;"></div>
<div style="left:485.6px;top:204px;width:317.2px;height:1.3px;background:#0c0c0c;"></div>
<div style="left:485.6px;top:226px;width:317.2px;height:1.3px;background:#0c0c0c;"></div>
<div style="left:485.6px;top:275.7px;width:317.2px;height:1.3px;background:#0c0c0c;"></div>
<div style="left:434.6px;top:246.7px;width:368.2px;height:1.3px;background:#0c0c0c;"></div>
<div style="left:352px;top:305px;width:450.8px;height:1.3px;background:#222;"></div>
<div style="left:579.4px;top:326px;width:149.8px;height:1px;background:#666;"></div>
<div style="left:729.2px;top:326px;width:73.6px;height:1px;background:#2b4f78;"></div>
<div class="t" style="left:356.2px;top:156px;font-size:10.1px;line-height:11px;height:11px;color:#0c0c0c;font-weight:700;">Person User</div>
<div class="t" style="left:356.2px;top:168px;font-size:10.1px;line-height:11px;height:11px;color:#0c0c0c;font-weight:700;">Name</div>
<div class="t" style="left:438.8px;top:156px;font-size:10.1px;line-height:11px;height:11px;color:#0c0c0c;font-weight:700;">Item</div>
<div class="t" style="left:438.8px;top:168px;font-size:10.1px;line-height:11px;height:11px;color:#0c0c0c;font-weight:700;">Type</div>
<div class="t" style="left:489.8px;top:156px;font-size:10.1px;line-height:11px;height:11px;color:#0c0c0c;font-weight:700;">Learning Item</div>
<div class="t" style="left:489.8px;top:168px;font-size:10.1px;line-height:11px;height:11px;color:#0c0c0c;font-weight:700;">Name</div>
<div class="t" style="left:583.6px;top:156px;font-size:10.1px;line-height:11px;height:11px;color:#0c0c0c;font-weight:700;">Total</div>
<div class="t" style="left:583.6px;top:168px;font-size:10.1px;line-height:11px;height:11px;color:#0c0c0c;font-weight:700;">Records</div>
<div class="t" style="left:650.8px;top:156px;font-size:10.1px;line-height:11px;height:11px;color:#0c0c0c;font-weight:700;">Percent</div>
<div class="t" style="left:650.8px;top:168px;font-size:10.1px;line-height:11px;height:11px;color:#0c0c0c;font-weight:700;">Complete</div>
<div class="t" style="left:733.4px;top:156px;font-size:10.1px;line-height:11px;height:11px;color:#0c0c0c;font-weight:700;">Awarded</div>
<div class="t" style="left:733.4px;top:168px;font-size:10.1px;line-height:11px;height:11px;color:#0c0c0c;font-weight:700;">Points</div>
<div class="t" style="left:352px;top:240px;font-size:8.7px;line-height:10px;height:10px;color:#3b76b4;width:82.6px;text-align:center;">10024891</div>
<div class="t" style="left:434.6px;top:209px;font-size:9.4px;line-height:11px;height:11px;color:#484848;width:51px;text-align:center;">Course</div>
<div class="t" style="left:434.6px;top:270px;font-size:9.4px;line-height:11px;height:11px;color:#484848;width:51px;text-align:center;">Offering</div>
<div class="t" style="left:489.9px;top:188px;font-size:8.7px;line-height:10px;height:10px;color:#3b76b4;">HTML</div>
<div class="t" style="left:489.9px;top:210px;font-size:8.7px;line-height:10px;height:10px;color:#3b76b4;">Induction</div>
<div class="t" style="left:489.9px;top:231px;font-size:8.7px;line-height:10px;height:10px;color:#3b76b4;">Induction Activity</div>
<div class="t" style="left:489.9px;top:252px;font-size:8.7px;line-height:10px;height:10px;color:#3b76b4;">Induction List of</div>
<div class="t" style="left:489.9px;top:262px;font-size:8.7px;line-height:10px;height:10px;color:#3b76b4;">Activities</div>
<div class="t" style="left:489.9px;top:281px;font-size:8.7px;line-height:10px;height:10px;color:#3b76b4;">Working with HCM</div>
<div class="t" style="left:489.9px;top:291px;font-size:8.7px;line-height:10px;height:10px;color:#3b76b4;">Extracts</div>
<div class="t" style="left:579.4px;top:188px;font-size:8.7px;line-height:10px;height:10px;color:#5e5e5e;width:67.2px;text-align:center;">1.0</div>
<div class="t" style="left:646.6px;top:188px;font-size:8.7px;line-height:10px;height:10px;color:#5e5e5e;width:82.6px;text-align:center;">0.0</div>
<div class="t" style="left:579.4px;top:210px;font-size:8.7px;line-height:10px;height:10px;color:#5e5e5e;width:67.2px;text-align:center;">1.0</div>
<div class="t" style="left:646.6px;top:210px;font-size:8.7px;line-height:10px;height:10px;color:#5e5e5e;width:82.6px;text-align:center;">0.0</div>
<div class="t" style="left:579.4px;top:231px;font-size:8.7px;line-height:10px;height:10px;color:#5e5e5e;width:67.2px;text-align:center;">1.0</div>
<div class="t" style="left:646.6px;top:231px;font-size:8.7px;line-height:10px;height:10px;color:#5e5e5e;width:82.6px;text-align:center;">0.0</div>
<div class="t" style="left:579.4px;top:252px;font-size:8.7px;line-height:10px;height:10px;color:#5e5e5e;width:67.2px;text-align:center;">1.0</div>
<div class="t" style="left:646.6px;top:252px;font-size:8.7px;line-height:10px;height:10px;color:#5e5e5e;width:82.6px;text-align:center;">0.0</div>
<div class="t" style="left:579.4px;top:281px;font-size:8.7px;line-height:10px;height:10px;color:#5e5e5e;width:67.2px;text-align:center;">1.0</div>
<div class="t" style="left:646.6px;top:281px;font-size:8.7px;line-height:10px;height:10px;color:#5e5e5e;width:82.6px;text-align:center;">100.0</div>
<div class="t" style="left:356.5px;top:310px;font-size:8.65px;line-height:10px;height:10px;color:#111;font-weight:700;">Grand Total</div>
<div class="t" style="left:579.4px;top:310px;font-size:8.5px;line-height:10px;height:10px;color:#111;font-weight:700;width:67.2px;text-align:center;">5.0</div>
<div class="t" style="left:646.6px;top:310px;font-size:8.5px;line-height:10px;height:10px;color:#111;font-weight:700;width:82.6px;text-align:center;">20.0</div>
<div class="t" style="left:175.5px;top:366px;font-size:8.7px;line-height:10px;height:10px;color:#3b76b4;width:100px;text-align:right;">Add to Briefing Book</div>
<div style="left:193.2px;top:441px;width:819px;height:15px;background:#eeeeee;"></div>
<svg style="left:199.2px;top:449.3px;" width="4.5" height="7" viewBox="0 0 4.5 7"><path d="M0 0L4.5 3.5L0 7Z" fill="#7a8088"/></svg>
<div class="t" style="left:207.6px;top:448px;font-size:10px;line-height:11px;height:11px;color:#1c1c1c;font-weight:700;">Selection Steps</div>
<div style="left:84.6px;top:1.8px;width:158.6px;height:396.2px;background:#fff;border-left:1px solid #ececec;box-shadow:0.6px 0.8px 1.6px rgba(0,0,0,0.42), 0 0 0.8px rgba(0,0,0,0.25);"></div>
<svg style="left:91.9px;top:10.7px;" width="10" height="10" viewBox="0 0 10 10"><rect x="0.00" y="0.00" width="2.90" height="2.90" fill="#7b7f83"/><rect x="3.55" y="0.00" width="2.90" height="2.90" fill="#7b7f83"/><rect x="7.10" y="0.00" width="2.90" height="2.90" fill="#7b7f83"/><rect x="0.00" y="3.55" width="2.90" height="2.90" fill="#7b7f83"/><rect x="3.90" y="3.90" width="2.20" height="2.20" fill="#f0f0f0" stroke="#a4a8ac" stroke-width="0.70"/><rect x="7.45" y="3.90" width="2.20" height="2.20" fill="#f0f0f0" stroke="#a4a8ac" stroke-width="0.70"/><rect x="0.00" y="7.10" width="2.90" height="2.90" fill="#7b7f83"/><rect x="3.90" y="7.45" width="2.20" height="2.20" fill="#f0f0f0" stroke="#a4a8ac" stroke-width="0.70"/><rect x="7.45" y="7.45" width="2.20" height="2.20" fill="#f0f0f0" stroke="#a4a8ac" stroke-width="0.70"/></svg>
<div class="t" style="left:107.9px;top:10px;font-size:8.7px;line-height:10px;height:10px;color:#2c2c2c;">Best Visualization</div>
<svg style="left:92.1px;top:34.74px;" width="10" height="10.8" viewBox="0 0 10 10.8"><rect x="0.55" y="2.6" width="2" height="8.2" fill="#1e1e1e"/><rect x="4" y="0.1" width="2.1" height="10.7" fill="#1e1e1e"/><rect x="7.6" y="3.2" width="2" height="7.6" fill="#1e1e1e"/></svg>
<div class="t" style="left:107.9px;top:35px;font-size:8.7px;line-height:10px;height:10px;color:#2c2c2c;">Recommended Visualization for</div>
<svg style="left:236.6px;top:37.44px;" width="4.3" height="6" viewBox="0 0 4.3 6"><path d="M0 0L4.3 3L0 6Z" fill="#6e7278"/></svg>
<svg style="left:91.9px;top:59.78px;" width="10" height="10.4" viewBox="0 0 10 10.4"><rect width="10" height="10.4" rx="0.5" fill="#fbab3c"/><text x="0.9" y="6.1" font-family="Liberation Sans, sans-serif" font-size="6.2" font-weight="700" fill="#fff">A</text></svg>
<div class="t" style="left:107.9px;top:60px;font-size:8.7px;line-height:10px;height:10px;color:#2c2c2c;">Title</div>
<svg style="left:91.9px;top:84.62px;" width="10" height="10" viewBox="0 0 10 10"><rect x="0.00" y="0.00" width="2.90" height="2.90" fill="#7b7f83"/><rect x="3.55" y="0.00" width="2.90" height="2.90" fill="#7b7f83"/><rect x="7.10" y="0.00" width="2.90" height="2.90" fill="#7b7f83"/><rect x="0.00" y="3.55" width="2.90" height="2.90" fill="#7b7f83"/><rect x="3.90" y="3.90" width="2.20" height="2.20" fill="#f0f0f0" stroke="#a4a8ac" stroke-width="0.70"/><rect x="7.45" y="3.90" width="2.20" height="2.20" fill="#f0f0f0" stroke="#a4a8ac" stroke-width="0.70"/><rect x="0.00" y="7.10" width="2.90" height="2.90" fill="#7b7f83"/><rect x="3.90" y="7.45" width="2.20" height="2.20" fill="#f0f0f0" stroke="#a4a8ac" stroke-width="0.70"/><rect x="7.45" y="7.45" width="2.20" height="2.20" fill="#f0f0f0" stroke="#a4a8ac" stroke-width="0.70"/></svg>
<div class="t" style="left:107.9px;top:84px;font-size:8.7px;line-height:10px;height:10px;color:#2c2c2c;">Table</div>
<svg style="left:91.9px;top:109.26px;" width="10" height="10" viewBox="0 0 10 10"><rect x="0.00" y="0.00" width="2.90" height="2.90" fill="#7b7f83"/><rect x="3.55" y="0.00" width="2.90" height="2.90" fill="#7b7f83"/><rect x="7.10" y="0.00" width="2.90" height="2.90" fill="#7b7f83"/><rect x="0.00" y="3.55" width="2.90" height="2.90" fill="#7b7f83"/><rect x="3.90" y="3.90" width="2.20" height="2.20" fill="#f0f0f0" stroke="#a4a8ac" stroke-width="0.70"/><rect x="7.45" y="3.90" width="2.20" height="2.20" fill="#f0f0f0" stroke="#a4a8ac" stroke-width="0.70"/><rect x="0.00" y="7.10" width="2.90" height="2.90" fill="#7b7f83"/><rect x="3.90" y="7.45" width="2.20" height="2.20" fill="#f0f0f0" stroke="#a4a8ac" stroke-width="0.70"/><rect x="7.45" y="7.45" width="2.20" height="2.20" fill="#f0f0f0" stroke="#a4a8ac" stroke-width="0.70"/></svg>
<div class="t" style="left:107.9px;top:109px;font-size:8.7px;line-height:10px;height:10px;color:#2c2c2c;">Pivot Table</div>
<svg style="left:91.8px;top:133.8px;" width="10.4" height="10.4" viewBox="0 0 10.4 10.4"><g fill="#ea4ea4"><rect x="0.3" y="0.2" width="1.5" height="1.1"/><rect x="2.5" y="0.2" width="1.5" height="1.1"/><rect x="4.7" y="0.2" width="1.5" height="1.1"/><rect x="6.9" y="0.2" width="1.5" height="1.1"/></g><text x="-0.1" y="10.3" font-family="Liberation Sans, sans-serif" font-size="9.8" fill="#ea4ea4" stroke="#ea4ea4" stroke-width="0.12" textLength="10.3" lengthAdjust="spacingAndGlyphs">50</text></svg>
<div class="t" style="left:107.9px;top:134px;font-size:8.7px;line-height:10px;height:10px;color:#2c2c2c;">Performance Tile</div>
<svg style="left:91.9px;top:158.54px;" width="10" height="10" viewBox="0 0 10 10"><rect width="10" height="10" fill="#fff"/><rect x="0" y="0" width="6" height="6.4" fill="#98c028"/><rect x="6.9" y="0" width="3.1" height="10" fill="#98c028"/><rect x="0" y="7.3" width="2.6" height="2.7" fill="#98c028"/><rect x="3.4" y="7.3" width="2.6" height="2.7" fill="#98c028"/></svg>
<div class="t" style="left:107.9px;top:159px;font-size:8.7px;line-height:10px;height:10px;color:#2c2c2c;">Treemap</div>
<svg style="left:92.2px;top:183.28px;" width="9.8" height="9.8" viewBox="0 0 9.8 9.8"><rect width="9.8" height="9.8" rx="0.5" fill="#a64cc4"/><g fill="#fff"><rect x="1.3" y="1.2" width="1.7" height="1.7"/><rect x="3.8" y="1.2" width="1.7" height="1.7"/><rect x="6.6" y="4" width="1.9" height="1.7"/><rect x="3.8" y="6.6" width="1.7" height="1.7"/></g><g fill="#d9b0e6"><rect x="3.8" y="4" width="1.7" height="1.7"/><rect x="1.3" y="6.6" width="1.7" height="1.7"/></g></svg>
<div class="t" style="left:107.9px;top:183px;font-size:8.7px;line-height:10px;height:10px;color:#2c2c2c;">Heat Matrix</div>
<svg style="left:91.9px;top:207.52px;" width="10.1" height="10.6" viewBox="0 0 10.1 10.6"><rect x="0.00" y="0.00" width="2.9" height="3" fill="#3a6ec8"/><rect x="3.60" y="0.00" width="2.9" height="3" fill="#3a6ec8"/><rect x="7.20" y="0.00" width="2.9" height="3" fill="#3a6ec8"/><rect x="0.00" y="3.70" width="2.9" height="3" fill="#3a6ec8"/><rect x="3.60" y="3.70" width="2.9" height="3" fill="#9bb4e2"/><rect x="4.10" y="5.20" width="1.9" height="1.5" fill="#4d7dd0"/><rect x="7.20" y="3.70" width="2.9" height="3" fill="#9bb4e2"/><rect x="7.70" y="5.20" width="1.9" height="1.5" fill="#4d7dd0"/><rect x="0.00" y="7.40" width="2.9" height="3" fill="#3a6ec8"/><rect x="3.60" y="7.40" width="2.9" height="3" fill="#9bb4e2"/><rect x="4.10" y="8.90" width="1.9" height="1.5" fill="#4d7dd0"/><rect x="7.20" y="7.40" width="2.9" height="3" fill="#9bb4e2"/><rect x="7.70" y="8.90" width="1.9" height="1.5" fill="#4d7dd0"/></svg>
<div class="t" style="left:107.9px;top:208px;font-size:8.7px;line-height:10px;height:10px;color:#2c2c2c;">Trellis</div>
<svg style="left:236.6px;top:209.92px;" width="4.3" height="6" viewBox="0 0 4.3 6"><path d="M0 0L4.3 3L0 6Z" fill="#6e7278"/></svg>
<svg style="left:92.1px;top:231.86px;" width="10" height="10.8" viewBox="0 0 10 10.8"><rect x="0.55" y="2.6" width="2" height="8.2" fill="#1e1e1e"/><rect x="4" y="0.1" width="2.1" height="10.7" fill="#1e1e1e"/><rect x="7.6" y="3.2" width="2" height="7.6" fill="#1e1e1e"/></svg>
<div class="t" style="left:107.9px;top:233px;font-size:8.7px;line-height:10px;height:10px;color:#2c2c2c;">Graph</div>
<svg style="left:236.6px;top:234.56px;" width="4.3" height="6" viewBox="0 0 4.3 6"><path d="M0 0L4.3 3L0 6Z" fill="#6e7278"/></svg>
<svg style="left:91px;top:257.7px;" width="11.6" height="8" viewBox="0 0 11.6 8"><path d="M1 6.6A4.8 4.8 0 0 1 10.6 6.6" fill="none" stroke="#f0802c" stroke-width="1.7" stroke-linecap="round"/><circle cx="5.6" cy="5.8" r="1.45" fill="#f0802c"/><path d="M5.6 5.8L7.6 3.2" stroke="#f0802c" stroke-width="1.1"/></svg>
<div class="t" style="left:107.9px;top:257px;font-size:8.7px;line-height:10px;height:10px;color:#2c2c2c;">Gauge</div>
<svg style="left:236.6px;top:259.2px;" width="4.3" height="6" viewBox="0 0 4.3 6"><path d="M0 0L4.3 3L0 6Z" fill="#6e7278"/></svg>
<svg style="left:91.5px;top:282.24px;" width="10.6" height="9.4" viewBox="0 0 10.6 9.4"><path d="M0.2 0.1L3.7 1.4V8L0.2 9.3Z" fill="#14a6a2"/><path d="M4.2 1.6L6.8 2.7V6.7L4.2 7.8Z" fill="#2fb8b4"/><path d="M7.2 2.9L10.5 4.7L7.2 6.5Z" fill="#4cc4c0"/></svg>
<div class="t" style="left:107.9px;top:282px;font-size:8.7px;line-height:10px;height:10px;color:#2c2c2c;">Funnel</div>
<svg style="left:236.6px;top:283.84px;" width="4.3" height="6" viewBox="0 0 4.3 6"><path d="M0 0L4.3 3L0 6Z" fill="#6e7278"/></svg>
<svg style="left:91px;top:305.98px;" width="11" height="11" viewBox="0 0 11 11"><circle cx="5.5" cy="5.5" r="5.4" fill="#ee5a9e"/><g stroke="#fbd0e4" stroke-width="0.6" fill="none"><ellipse cx="5.5" cy="5.5" rx="2.4" ry="5.3"/><path d="M5.5 0.2V10.8M0.2 5.5H10.8M1 2.9H10M1 8.1H10"/></g></svg>
<div class="t" style="left:107.9px;top:307px;font-size:8.7px;line-height:10px;height:10px;color:#2c2c2c;">Map</div>
<svg style="left:91.5px;top:330.82px;" width="10.6" height="11" viewBox="0 0 10.6 11"><path d="M0.1 0.3H10.5L6.5 4.8V10L4.3 10.9V4.8Z" fill="#2f80d8"/></svg>
<div class="t" style="left:107.9px;top:331px;font-size:8.7px;line-height:10px;height:10px;color:#2c2c2c;">Filters</div>
<svg style="left:90.6px;top:354.86px;" width="12" height="12" viewBox="0 0 12 12"><path d="M0.5 3.2V0.5H11.5V3.2M0.5 8.8V11.5H11.5V8.8" fill="none" stroke="#cf62b4" stroke-width="0.9"/><g fill="#d96cbc"><ellipse cx="4.3" cy="5.2" rx="1" ry="1.9" transform="rotate(24 4.3 5.2)"/><ellipse cx="8.7" cy="3.9" rx="1" ry="1.9" transform="rotate(24 8.7 3.9)"/><circle cx="2.9" cy="8.9" r="0.8"/><circle cx="7.1" cy="7.5" r="0.8"/></g></svg>
<div class="t" style="left:107.9px;top:356px;font-size:8.7px;line-height:10px;height:10px;color:#2c2c2c;">Selection Steps</div>
<div class="t" style="left:96.4px;top:380px;font-size:8.7px;line-height:10px;height:10px;color:#2c2c2c;">Other Views</div>
<svg style="left:236.6px;top:382.4px;" width="4.3" height="6" viewBox="0 0 4.3 6"><path d="M0 0L4.3 3L0 6Z" fill="#6e7278"/></svg>
<div style="left:86.2px;top:124.9px;width:157.4px;height:26.1px;border:3px solid #000;border-radius:5.5px;"></div>
</div>
</body>
</html>
